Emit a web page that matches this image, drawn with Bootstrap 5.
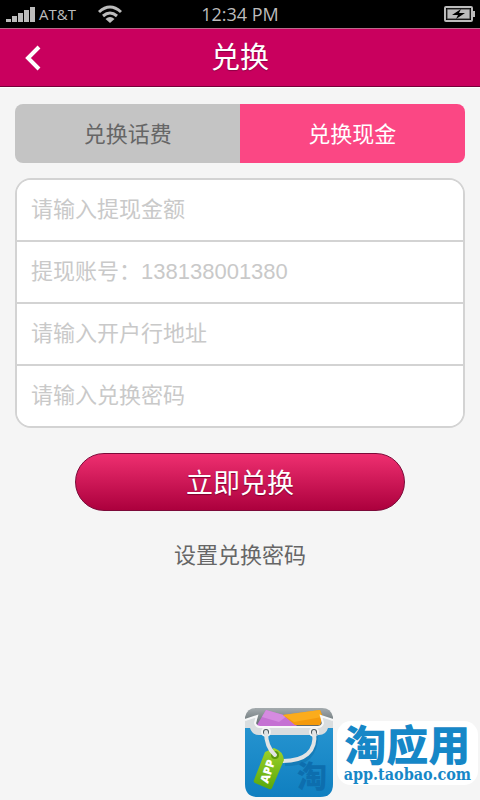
<!DOCTYPE html>
<html lang="zh-CN">
<head>
<meta charset="utf-8">
<meta name="viewport" content="width=device-width, initial-scale=1">
<title>兑换</title>
<link href="https://cdn.jsdelivr.net/npm/bootstrap@5.3.0/dist/css/bootstrap.min.css" rel="stylesheet">
<style>
body{background:#f5f5f5;font-family:"Liberation Sans","Noto Sans CJK SC",sans-serif;font-size:22px}
.status-strip{height:28px;background:#000;color:#bcbcbc;font-family:"Open Sans",sans-serif;font-size:18px;line-height:26px;padding:0 4px 0 6px}
.status-strip .carrier{font-size:15px}
.title-bar{height:59px;background:#c9005e;border-top:1px solid #b96b8b;border-bottom:1px solid #75003a;box-shadow:0 1px 0 #fff}
.title-bar h1{font-size:29px;line-height:56px;text-shadow:0 1px 1px #8d0046}
.title-bar .side{flex:1 1 0}
.back-link{padding:16px 24px;line-height:0}
.content{padding:17px 15px 0}
.switcher .btn{height:59px;padding:8px 0 6px;font-size:22px;border:0;border-radius:8px;background:#c4c4c4;color:#666}
.switcher .btn.active{background:#fb4784;color:#fff}
.field-box{margin-top:15px;border:2px solid #d3d3d3;border-radius:16px;overflow:hidden;background:#fff}
.field-box .form-control{height:60px;padding:0 14px;font-size:22px;border:0;border-radius:0}
.field-box .field-row + .field-row{border-top:2px solid #d3d3d3}
.field-box .form-control::placeholder{color:#c9c9c9;opacity:1}
.submit-wrap{padding:25px 60px 0}
.submit-btn{height:58px;padding:8px 0 4px;font-size:27px;line-height:1;color:#fff;border:1px solid #7c0a39;background:linear-gradient(#ee2f70,#ac003d);text-shadow:0 1px 1px #80002f}
.submit-btn:hover{color:#fff}
.set-link{margin-top:28px;line-height:34px;color:#666}
.store{padding:0 2px 2px 0;gap:3px}
.store-name{color:#1687c7;background:#fff;border-radius:14px;padding:0 7px}
.store-cn{font-family:"Noto Sans CJK SC",sans-serif;font-weight:900;font-size:42px;line-height:44px}
.store-url{font-family:"DejaVu Serif Condensed","DejaVu Serif",serif;font-weight:700;font-size:16px;line-height:20px}
</style>
<script src="https://cdn.jsdelivr.net/npm/bootstrap@5.3.0/dist/js/bootstrap.bundle.min.js"></script>
</head>
<body class="d-flex flex-column min-vh-100">
<div class="status-strip d-flex align-items-center justify-content-between position-relative">
  <div class="d-flex align-items-center">
    <svg width="29" height="15" viewBox="0 0 29 15" fill="#bcbcbc" aria-hidden="true"><path d="M0 12h5v3H0zM6 9h5v6H6zM12 6h5v9h-5zM18 3h5v12h-5zM24 0h5v15h-5z"/></svg>
    <span class="carrier ms-1">AT&amp;T</span>
    <svg class="ms-4" width="20" height="18" viewBox="1 0 20 18" overflow="visible" fill="none" stroke="#bcbcbc" stroke-width="3" aria-hidden="true"><path d="M0 7Q11-3 22 7M4 11Q11 5 18 11"/><path d="M6.500 14Q11 10 15.500 14L11 18z" fill="#bcbcbc" stroke="none"/></svg>
  </div>
  <span class="position-absolute start-50 translate-middle-x">12:34 PM</span>
  <svg width="32" height="16" viewBox="0 0 32 16" aria-hidden="true"><rect x="1" y="1" width="27" height="14" rx="1" fill="none" stroke="#bcbcbc" stroke-width="2"/><path d="M3 3h23v10H3z" fill="#bcbcbc"/><path d="M3 3h23v10H3z" fill="none" stroke="#333" stroke-width="1"/><path d="M28 5h3v6h-3z" fill="#bcbcbc"/><path d="M17 3L8 9h6l-2 4 9-6h-6z" fill="#000"/></svg>
</div>
<header class="title-bar d-flex align-items-center">
  <div class="side d-flex"><a href="#" class="back-link" aria-label="返回"><svg width="18" height="26" viewBox="0 0 18 26" fill="none" stroke="#fff" stroke-width="4"><path d="M15 2L4 13 15 24"/></svg></a></div>
  <h1 class="m-0 text-white fw-normal">兑换</h1>
  <div class="side"></div>
</header>
<main class="content d-flex flex-column">
  <div class="switcher btn-group w-100" role="group" aria-label="兑换方式">
    <button type="button" class="btn w-50">兑换话费</button>
    <button type="button" class="btn w-50 active" aria-pressed="true">兑换现金</button>
  </div>
  <form>
    <div class="field-box">
      <div class="field-row"><input aria-label="提现金额" class="form-control" type="text" placeholder="请输入提现金额"></div>
      <div class="field-row"><input aria-label="提现账号" class="form-control" type="text" placeholder="提现账号：138138001380"></div>
      <div class="field-row"><input aria-label="开户行地址" class="form-control" type="text" placeholder="请输入开户行地址"></div>
      <div class="field-row"><input aria-label="兑换密码" class="form-control" type="password" placeholder="请输入兑换密码"></div>
    </div>
    <div class="submit-wrap"><button type="submit" class="btn submit-btn rounded-pill w-100">立即兑换</button></div>
  </form>
  <a href="#" class="set-link align-self-center text-decoration-none">设置兑换密码</a>
</main>
<footer class="store mt-auto d-flex justify-content-end align-items-center">
  <svg width="90" height="90" viewBox="0 0 90 90" role="img" aria-label="APP">
    <defs>
      <linearGradient id="bag" x2="0" y2="1"><stop stop-color="#2694d0"/><stop offset="1" stop-color="#0f7fc0"/></linearGradient>
      <linearGradient id="rim" x2="0" y2="1"><stop stop-color="#a4abae"/><stop offset="1" stop-color="#4d585c"/></linearGradient>
      <linearGradient id="tag" x2="0" y2="1"><stop stop-color="#a0d22a"/><stop offset="1" stop-color="#58a80c"/></linearGradient>
    </defs>
    <path d="M12 0h66q9 0 11 9v14H1V9Q3 0 12 0z" fill="url(#rim)"/>
    <path d="M13 17L22 2l21 6 10 10H13z" fill="#c571d3"/><path d="M22 2l21 6-8 6-17-5z" fill="#d58be0"/>
    <path d="M39 7l37-5 3 7-3 8H51z" fill="#f59a0c"/><path d="M39 7l37-5 2 7-28 5z" fill="#fbac1c"/>
    <path d="M1 18h88v58q0 13-13 13H14Q1 89 1 76z" fill="url(#bag)"/>
    <path d="M1 12L13 8l-1 8q1 2 4 2h58q3 0 4-2l-1-8 12 4v8l-5 0q-2 7-9 7H15q-7 0-9-7l-5 0z" fill="#d9dddf"/>
    <path d="M1 12l12-4-2 7q1 4 5 4h58q4 0 5-4l-2-7 12 4" fill="none" stroke="#f7f8f8" stroke-width="2"/>
    <circle cx="22" cy="24" r="5" fill="#f4f4f4"/><circle cx="70" cy="24" r="5" fill="#f4f4f4"/>
    <circle cx="22" cy="24" r="3" fill="#47545b"/><circle cx="70" cy="24" r="3" fill="#47545b"/>
    <path d="M72 26Q73 57 41 56" fill="none" stroke="#075d91" stroke-width="4" opacity=".3"/>
    <path d="M70 24C73 44 60 53 39 53" fill="none" stroke="#e2e4e5" stroke-width="4" stroke-linecap="round"/>
    <text x="53" y="79" font-size="30" font-weight="900" fill="#0d6eae" font-family="Noto Sans CJK SC">淘</text>
    <path d="M21 44L30 40Q39 43 40 52L28 80q-1 2-3 1L11 75q-2-1-1-3z" fill="url(#tag)"/>
    <circle cx="31" cy="47" r="4" fill="#5b980d"/>
    <path d="M22 24Q22 39 31 47" fill="none" stroke="#e2e4e5" stroke-width="4" stroke-linecap="round"/>
    <text transform="translate(24 76) rotate(-72)" font-size="12" font-weight="900" fill="#fff" font-family="Open Sans">APP</text>
  </svg>
  <div class="store-name d-flex flex-column align-items-center">
    <span class="store-cn">淘应用</span>
    <a href="#" class="store-url text-reset text-decoration-none">app.taobao.com</a>
  </div>
</footer>
</body>
</html>
